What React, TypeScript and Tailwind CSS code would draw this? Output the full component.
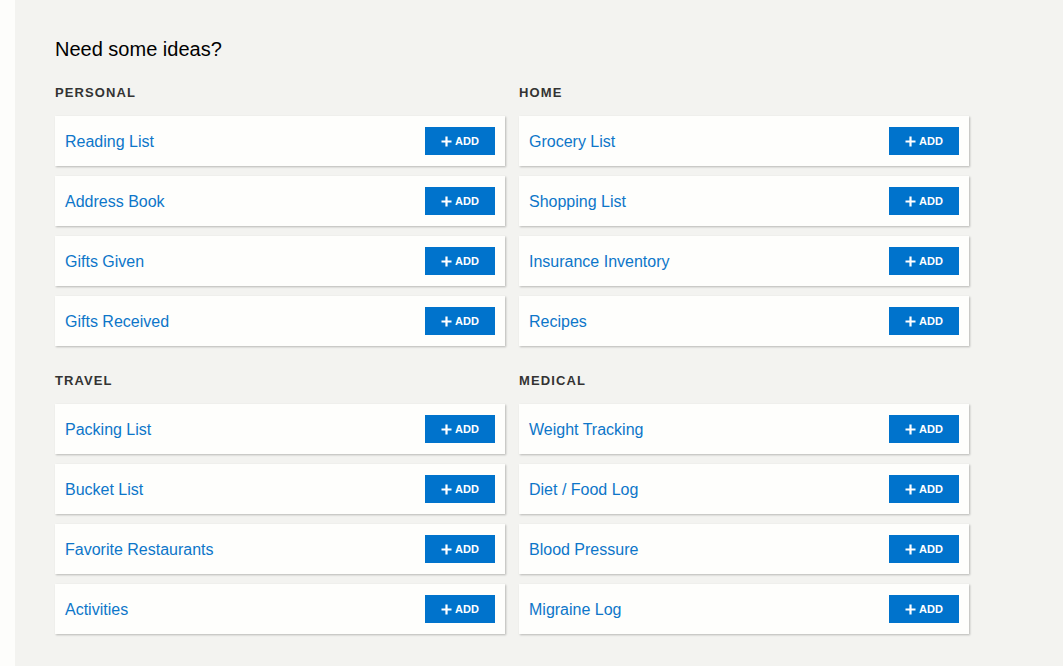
const SECTIONS = [
  { title: "PERSONAL", items: ["Reading List", "Address Book", "Gifts Given", "Gifts Received"] },
  { title: "HOME", items: ["Grocery List", "Shopping List", "Insurance Inventory", "Recipes"] },
  { title: "TRAVEL", items: ["Packing List", "Bucket List", "Favorite Restaurants", "Activities"] },
  { title: "MEDICAL", items: ["Weight Tracking", "Diet / Food Log", "Blood Pressure", "Migraine Log"] },
];

function AddButton() {
  return (
    <button className="flex h-[28px] w-[70px] items-center justify-center gap-[3px] bg-[#0073cc] text-white">
      <svg width="11" height="11" viewBox="0 0 11 11">
        <path d="M5.5 0.5v10M0.5 5.5h10" stroke="white" strokeWidth="2.2" />
      </svg>
      <span className="text-[11px] font-bold leading-none">ADD</span>
    </button>
  );
}

function Section({ title, items }: { title: string; items: string[] }) {
  return (
    <div>
      <div className="mb-[14px] text-[13px] font-bold leading-[18px] tracking-[1.1px] text-[#333]">{title}</div>
      <div className="flex flex-col gap-[10px]">
        {items.map((it) => (
          <div
            key={it}
            className="flex h-[50px] items-center justify-between bg-[#fefefc] pl-[10px] pr-[10px] shadow-[1px_1px_2px_rgba(0,0,0,0.25)]"
          >
            <span className="pt-[2px] text-[16px] text-[#0d76c9]">{it}</span>
            <AddButton />
          </div>
        ))}
      </div>
    </div>
  );
}

export default function App() {
  return (
    <div className="min-h-[666px] bg-[#fdfdfb] pl-[15px]" style={{ fontFamily: '"Liberation Sans", Arial, sans-serif' }}>
      <div className="min-h-[666px] bg-[#f3f3f0] pl-[40px] pt-[37px]">
        <h2 className="mb-[23px] text-[20px] leading-[24px] text-black">Need some ideas?</h2>
        <div className="grid w-[914px] grid-cols-[450px_450px] gap-x-[14px] gap-y-[26px]">
          {SECTIONS.map((s) => (
            <Section key={s.title} title={s.title} items={s.items} />
          ))}
        </div>
      </div>
    </div>
  );
}
